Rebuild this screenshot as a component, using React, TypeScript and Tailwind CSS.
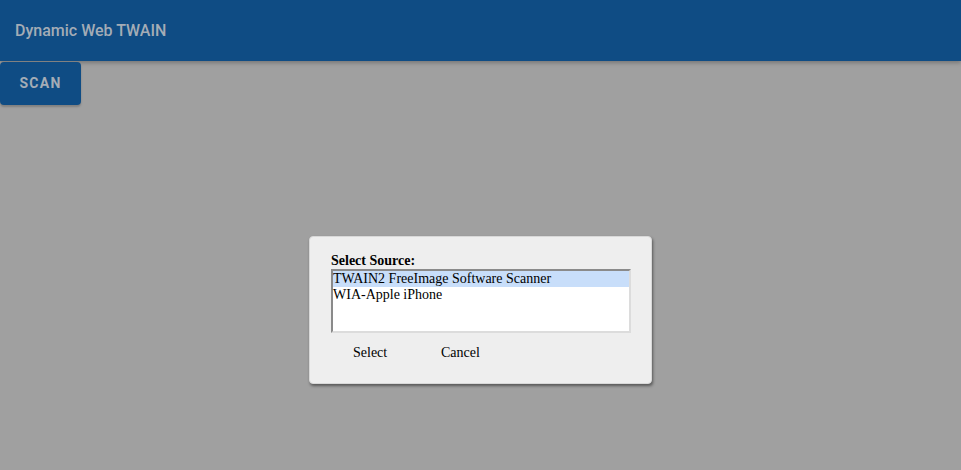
import React from 'react'

export default function App() {
  const sources = ['TWAIN2 FreeImage Software Scanner', 'WIA-Apple iPhone']

  return (
    <div className="relative h-[470px] w-full overflow-hidden bg-[#a0a0a0]">
      {/* App bar */}
      <header className="flex h-[61px] items-center bg-[#0f4c84] px-[15px] shadow-[0_2px_4px_rgba(0,0,0,0.25)]">
        <h1 className="font-['Roboto',sans-serif] text-[16px] font-medium text-[#a4acb6]">Dynamic Web TWAIN</h1>
      </header>

      <button className="mt-px flex h-[43px] w-[81px] items-center justify-center rounded-[4px] bg-[#0f4c84] font-['Roboto',sans-serif] text-[14px] font-bold tracking-[0.09em] text-[#a4acb6] shadow-[0_2px_2px_rgba(0,0,0,0.2)]">
        SCAN
      </button>

      {/* Select source dialog */}
      <div className="absolute left-[309px] top-[236px] w-[343px] rounded-[4px] border border-[#d8d8d8] bg-[#eeeeee] px-[21px] pt-[15px] pb-[22px] font-['Liberation_Serif',serif] text-[14px] text-black shadow-[1px_2px_3px_rgba(0,0,0,0.45)]">
        <div className="font-bold leading-[17px]">Select Source:</div>
        <div className="h-[64px] w-[300px] border-2 border-t-[#8a8a8a] border-l-[#8a8a8a] border-b-[#dcdcdc] border-r-[#dcdcdc] bg-white">
          {sources.map((s, i) => (
            <div key={s} className={`leading-[16px] ${i === 0 ? 'bg-[#c8defa]' : ''}`}>
              {s}
            </div>
          ))}
        </div>
        <div className="mt-[12px] flex pl-[22px] leading-[16px]">
          <span className="w-[88px]">Select</span>
          <span>Cancel</span>
        </div>
      </div>
    </div>
  )
}
